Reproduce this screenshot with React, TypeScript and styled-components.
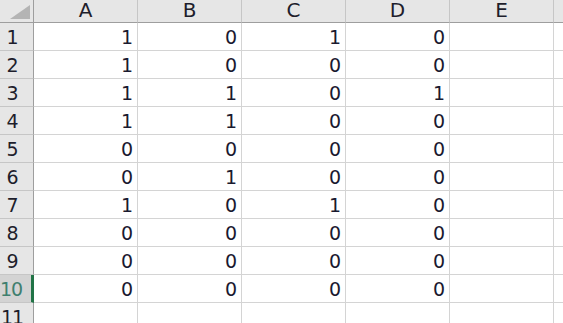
import React from "react";
import styled, { createGlobalStyle } from "styled-components";

const GlobalStyle = createGlobalStyle`
  html, body {
    margin: 0;
    padding: 0;
    background: #ffffff;
  }
  body {
    font-family: "DejaVu Sans", "Liberation Sans", sans-serif;
  }
`;

const columns = ["A", "B", "C", "D", "E", ""];
const data = [
  [1, 0, 1, 0],
  [1, 0, 0, 0],
  [1, 1, 0, 1],
  [1, 1, 0, 0],
  [0, 0, 0, 0],
  [0, 1, 0, 0],
  [1, 0, 1, 0],
  [0, 0, 0, 0],
  [0, 0, 0, 0],
  [0, 0, 0, 0],
];
const activeRow = 10;

const Sheet = styled.div`
  display: grid;
  grid-template-columns: 34px repeat(6, 104px);
  grid-auto-rows: 28px;
  grid-template-rows: 23px;
  width: 563px;
  height: 323px;
  overflow: hidden;
`;

const Corner = styled.div`
  position: relative;
  background: #e6e6e6;
  border-right: 1px solid #9e9e9e;
  border-bottom: 1px solid #9e9e9e;
  box-sizing: border-box;
`;

const CornerMark = styled.div`
  position: absolute;
  left: 10px;
  top: 5px;
  width: 20px;
  height: 14px;
  background: #b4b4b4;
  clip-path: polygon(100% 0, 100% 100%, 0 100%);
`;

const ColHeader = styled.div`
  display: flex;
  align-items: center;
  justify-content: center;
  background: #e6e6e6;
  border-right: 1px solid #c6c6c6;
  border-bottom: 1px solid #9e9e9e;
  box-sizing: border-box;
  font-size: 20px;
  line-height: 20px;
  color: #1e1e2c;
  padding-bottom: 2px;
`;

const RowHeader = styled.div<{ $active?: boolean }>`
  display: flex;
  align-items: flex-end;
  justify-content: center;
  padding: 0 9px 2px 0;
  background: ${(p) => (p.$active ? "#d3d3d3" : "#e6e6e6")};
  border-right: ${(p) => (p.$active ? "3px solid #217346" : "1px solid #9e9e9e")};
  border-bottom: 1px solid #c6c6c6;
  box-sizing: border-box;
  font-size: 19px;
  line-height: 22px;
  letter-spacing: -1px;
  color: ${(p) => (p.$active ? "#3f7f6f" : "#1e1e2c")};
`;

const Cell = styled.div`
  display: flex;
  align-items: flex-end;
  justify-content: flex-end;
  padding: 0 4px 2px 0;
  border-right: 1px solid #d4d4d4;
  border-bottom: 1px solid #d4d4d4;
  box-sizing: border-box;
  font-size: 19px;
  line-height: 22px;
  color: #1a1a30;
`;

export default function App() {
  const rows = [...data.map((r) => r as (number | null)[]), [], []];
  return (
    <>
      <GlobalStyle />
      <Sheet>
        <Corner>
          <CornerMark />
        </Corner>
        {columns.map((c, i) => (
          <ColHeader key={i}>{c}</ColHeader>
        ))}
        {rows.map((row, r) => (
          <React.Fragment key={r}>
            <RowHeader $active={r + 1 === activeRow}>{r + 1}</RowHeader>
            {columns.map((_, c) => (
              <Cell key={c}>{row[c] ?? ""}</Cell>
            ))}
          </React.Fragment>
        ))}
      </Sheet>
    </>
  );
}
